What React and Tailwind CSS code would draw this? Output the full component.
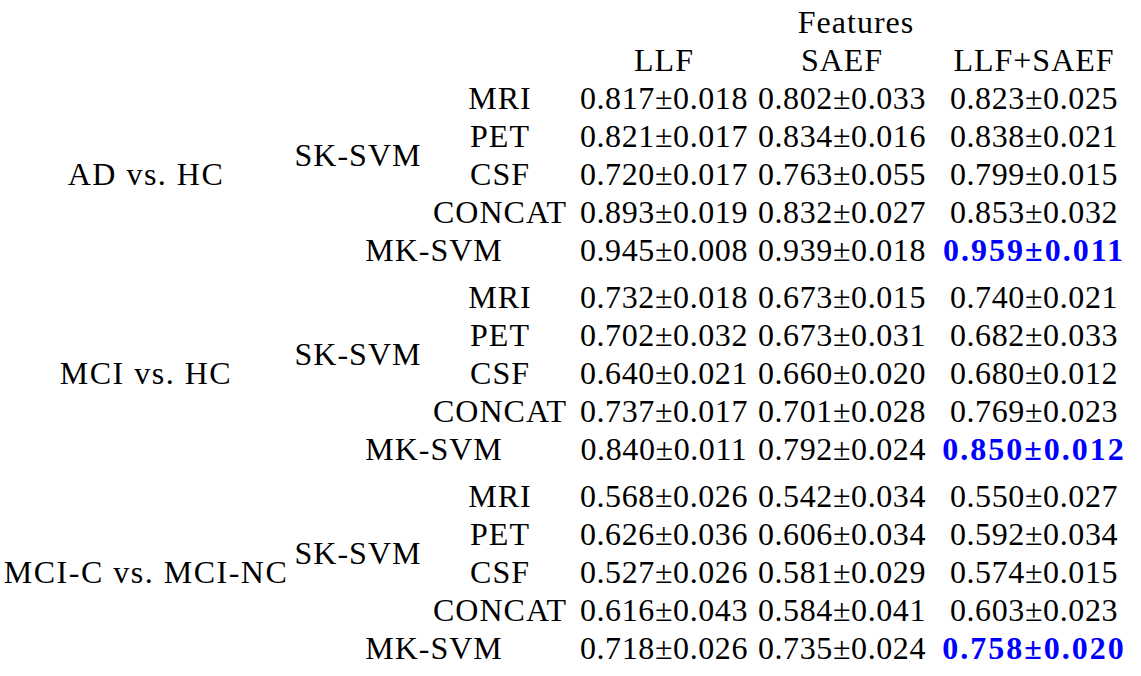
import React from "react";

const groups = [
  {
    task: "AD vs. HC",
    rows: [
      ["MRI", "0.817±0.018", "0.802±0.033", "0.823±0.025"],
      ["PET", "0.821±0.017", "0.834±0.016", "0.838±0.021"],
      ["CSF", "0.720±0.017", "0.763±0.055", "0.799±0.015"],
      ["CONCAT", "0.893±0.019", "0.832±0.027", "0.853±0.032"],
    ],
    mk: ["0.945±0.008", "0.939±0.018", "0.959±0.011"],
  },
  {
    task: "MCI vs. HC",
    rows: [
      ["MRI", "0.732±0.018", "0.673±0.015", "0.740±0.021"],
      ["PET", "0.702±0.032", "0.673±0.031", "0.682±0.033"],
      ["CSF", "0.640±0.021", "0.660±0.020", "0.680±0.012"],
      ["CONCAT", "0.737±0.017", "0.701±0.028", "0.769±0.023"],
    ],
    mk: ["0.840±0.011", "0.792±0.024", "0.850±0.012"],
  },
  {
    task: "MCI-C vs. MCI-NC",
    rows: [
      ["MRI", "0.568±0.026", "0.542±0.034", "0.550±0.027"],
      ["PET", "0.626±0.036", "0.606±0.034", "0.592±0.034"],
      ["CSF", "0.527±0.026", "0.581±0.029", "0.574±0.015"],
      ["CONCAT", "0.616±0.043", "0.584±0.041", "0.603±0.023"],
    ],
    mk: ["0.718±0.026", "0.735±0.024", "0.758±0.020"],
  },
];

const base =
  "p-0 h-[38px] text-center align-middle whitespace-nowrap font-['Liberation_Serif'] text-[32px] leading-[38px]";
const label = `${base} tracking-[1px]`;
const task = `${base} tracking-[1.5px]`;
const num = `${base} tracking-[0.6px]`;
const best = `${base} tracking-[2px] font-bold text-[#0000ff]`;

export default function App() {
  return (
    <div className="w-[1141px] h-[676px] bg-white text-black pt-[3px] font-['Liberation_Serif'] text-[32px] leading-[38px] overflow-hidden">
      <table className="table-fixed border-collapse w-[1136px] font-['Liberation_Serif']">
        <colgroup>
          <col className="w-[292px]" />
          <col className="w-[132px]" />
          <col className="w-[152px]" />
          <col className="w-[176px]" />
          <col className="w-[180px]" />
          <col className="w-[204px]" />
        </colgroup>
        <tbody>
          <tr>
            <td className={label}></td>
            <td className={label}></td>
            <td className={label}></td>
            <td className={label} colSpan={3}>Features</td>
          </tr>
          <tr>
            <td className={label}></td>
            <td className={label}></td>
            <td className={label}></td>
            <td className={label}>LLF</td>
            <td className={label}>SAEF</td>
            <td className={label}>LLF+SAEF</td>
          </tr>
          {groups.map((g, gi) => (
            <React.Fragment key={gi}>
              {gi > 0 && (
                <tr>
                  <td colSpan={6} className="p-0 h-[9px] leading-[0]"></td>
                </tr>
              )}
              {g.rows.map((r, ri) => (
                <tr key={ri}>
                  {ri === 0 && (
                    <td className={task} rowSpan={5}>{g.task}</td>
                  )}
                  {ri === 0 && (
                    <td className={label} rowSpan={4}>SK-SVM</td>
                  )}
                  <td className={label}>{r[0]}</td>
                  <td className={num}>{r[1]}</td>
                  <td className={num}>{r[2]}</td>
                  <td className={num}>{r[3]}</td>
                </tr>
              ))}
              <tr>
                <td className={label} colSpan={2}>MK-SVM</td>
                <td className={num}>{g.mk[0]}</td>
                <td className={num}>{g.mk[1]}</td>
                <td className={best}>{g.mk[2]}</td>
              </tr>
            </React.Fragment>
          ))}
        </tbody>
      </table>
    </div>
  );
}
